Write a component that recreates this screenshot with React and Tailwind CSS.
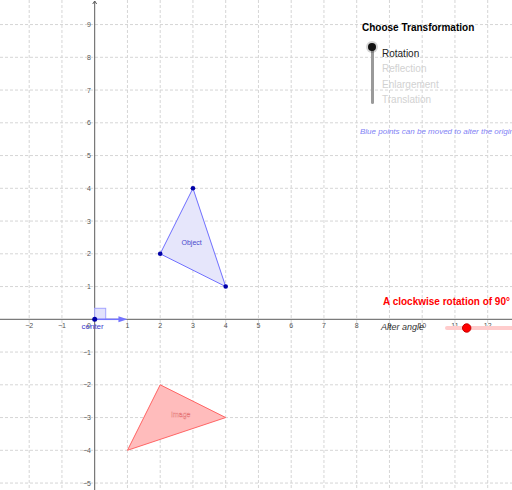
import React from "react";

const U = 32.75;
const OX = 94.7;
const OY = 319.3;
const px = (x) => OX + x * U;
const py = (y) => OY - y * U;
const F = "Liberation Sans, Arial, sans-serif";

function Graph() {
  const vx = [];
  for (let k = -2; k <= 12; k++) if (k !== 0) vx.push(k);
  const hy = [];
  for (let k = -5; k <= 9; k++) if (k !== 0) hy.push(k);
  const obj = [[2, 2], [3, 4], [4, 1]];
  const img = [[2, -2], [4, -3], [1, -4]];
  const pts = (a) => a.map(([x, y]) => `${px(x)},${py(y)}`).join(" ");
  const minus = (k) => (k < 0 ? "\u2212" + -k : String(k));
  return (
    <svg width="512" height="490" className="absolute inset-0" fontFamily={F}>
      <rect width="512" height="490" fill="#ffffff" />
      {vx.map((k) => (
        <line key={"v" + k} x1={px(k)} y1="0" x2={px(k)} y2="490" stroke="#d6d6d6" strokeWidth="1" strokeDasharray="3 2" />
      ))}
      {hy.map((k) => (
        <line key={"h" + k} x1="0" y1={py(k)} x2="512" y2={py(k)} stroke="#d6d6d6" strokeWidth="1" strokeDasharray="3 2" />
      ))}
      <line x1="0" y1={OY} x2="512" y2={OY} stroke="#5a5a5a" strokeWidth="1" />
      <line x1={OX} y1="1" x2={OX} y2="490" stroke="#5a5a5a" strokeWidth="1" />
      <polyline points={`${OX - 2},4 ${OX},1 ${OX + 2},4`} fill="none" stroke="#5a5a5a" strokeWidth="1" />
      {vx.map((k) => (
        <text key={"lx" + k} x={px(k)} y="327.5" fontSize="7" fill="#555" textAnchor="middle">
          {minus(k)}
        </text>
      ))}
      <text x="91" y="327.5" fontSize="7" fill="#555" textAnchor="end">0</text>
      {hy.map((k) => (
        <text key={"ly" + k} x="91" y={py(k) + 2.5} fontSize="7" fill="#555" textAnchor="end">
          {minus(k)}
        </text>
      ))}

      <polygon points={pts(obj)} fill="#e6e6fb" stroke="#6f6fff" strokeWidth="1" />
      {obj.map(([x, y], i) => (
        <circle key={"o" + i} cx={px(x)} cy={py(y)} r="2.3" fill="#0000a8" />
      ))}
      <text x="181.5" y="244.5" fontSize="7" fill="#4a4acc">Object</text>

      <polygon points={pts(img)} fill="#ffbcbc" stroke="#ff6464" strokeWidth="1" />
      <text x="171" y="417" fontSize="7" fill="#ffffff" stroke="#e87070" strokeWidth="0.4">Image</text>

      <rect x={OX} y={OY - 11} width="11" height="11" fill="#e2e2fc" stroke="#a4a4ff" strokeWidth="1" />
      <line x1={OX} y1={OY} x2={px(1) - 8} y2={OY} stroke="#7474ff" strokeWidth="1.5" />
      <polygon points={`${px(1)},${OY} ${px(1) - 9},${OY - 3} ${px(1) - 9},${OY + 3}`} fill="#7474ff" />
      <circle cx={OX} cy={OY} r="2.5" fill="#0000a8" />
      <text x="81.5" y="329.3" fontSize="8" fill="#4040cc">center</text>

      <line x1="447" y1="328" x2="512" y2="328" stroke="#ffcccc" strokeWidth="4" strokeLinecap="round" />
      <circle cx="466.7" cy="328" r="4.2" fill="#ff0000" stroke="#c80000" strokeWidth="1" />
    </svg>
  );
}

function TransformChooser() {
  const options = [
    { label: "Rotation", active: true },
    { label: "Reflection" },
    { label: "Enlargement" },
    { label: "Translation" },
  ];
  return (
    <div className="absolute left-[362px] top-[23px] flex flex-col gap-[8px] whitespace-nowrap">
      <div className="text-[10px] leading-[10px] font-bold text-black">Choose Transformation</div>
      <div className="flex gap-[4px] pl-[4px]">
        <div className="relative w-[12px] h-[64px] flex justify-center">
          <div className="mt-[6px] w-[3px] h-[57px] bg-[#9a9a9a] rounded-full" />
          <div className="absolute left-0 top-0 w-[12px] h-[12px] rounded-full bg-[#0000002a] flex items-center justify-center">
            <div className="w-[8px] h-[8px] rounded-full bg-[#111111]" />
          </div>
        </div>
        <div className="pt-[5px] flex flex-col text-[10px] leading-[15.3px]">
          {options.map((o) => (
            <span key={o.label} className={o.active ? "text-[#222222]" : "text-[#d2d2d2]"}>
              {o.label}
            </span>
          ))}
        </div>
      </div>
    </div>
  );
}

export default function App() {
  return (
    <div className="relative w-[512px] h-[490px] overflow-hidden bg-white font-['Liberation_Sans',Arial,sans-serif]">
      <Graph />
      <TransformChooser />

      <div className="absolute left-[360px] top-[128px] text-[8px] leading-[8px] italic text-[#8282f5] whitespace-nowrap">
        Blue points can be moved to alter the original object
      </div>

      <div className="absolute left-[383px] top-[297px] text-[10px] leading-[10px] font-bold text-[#ff0000] whitespace-nowrap">
        A clockwise rotation of 90°
      </div>

      <div className="absolute left-[381px] top-[323px] text-[9px] leading-[9px] italic text-[#333333] whitespace-nowrap">
        Alter angle
      </div>
    </div>
  );
}
